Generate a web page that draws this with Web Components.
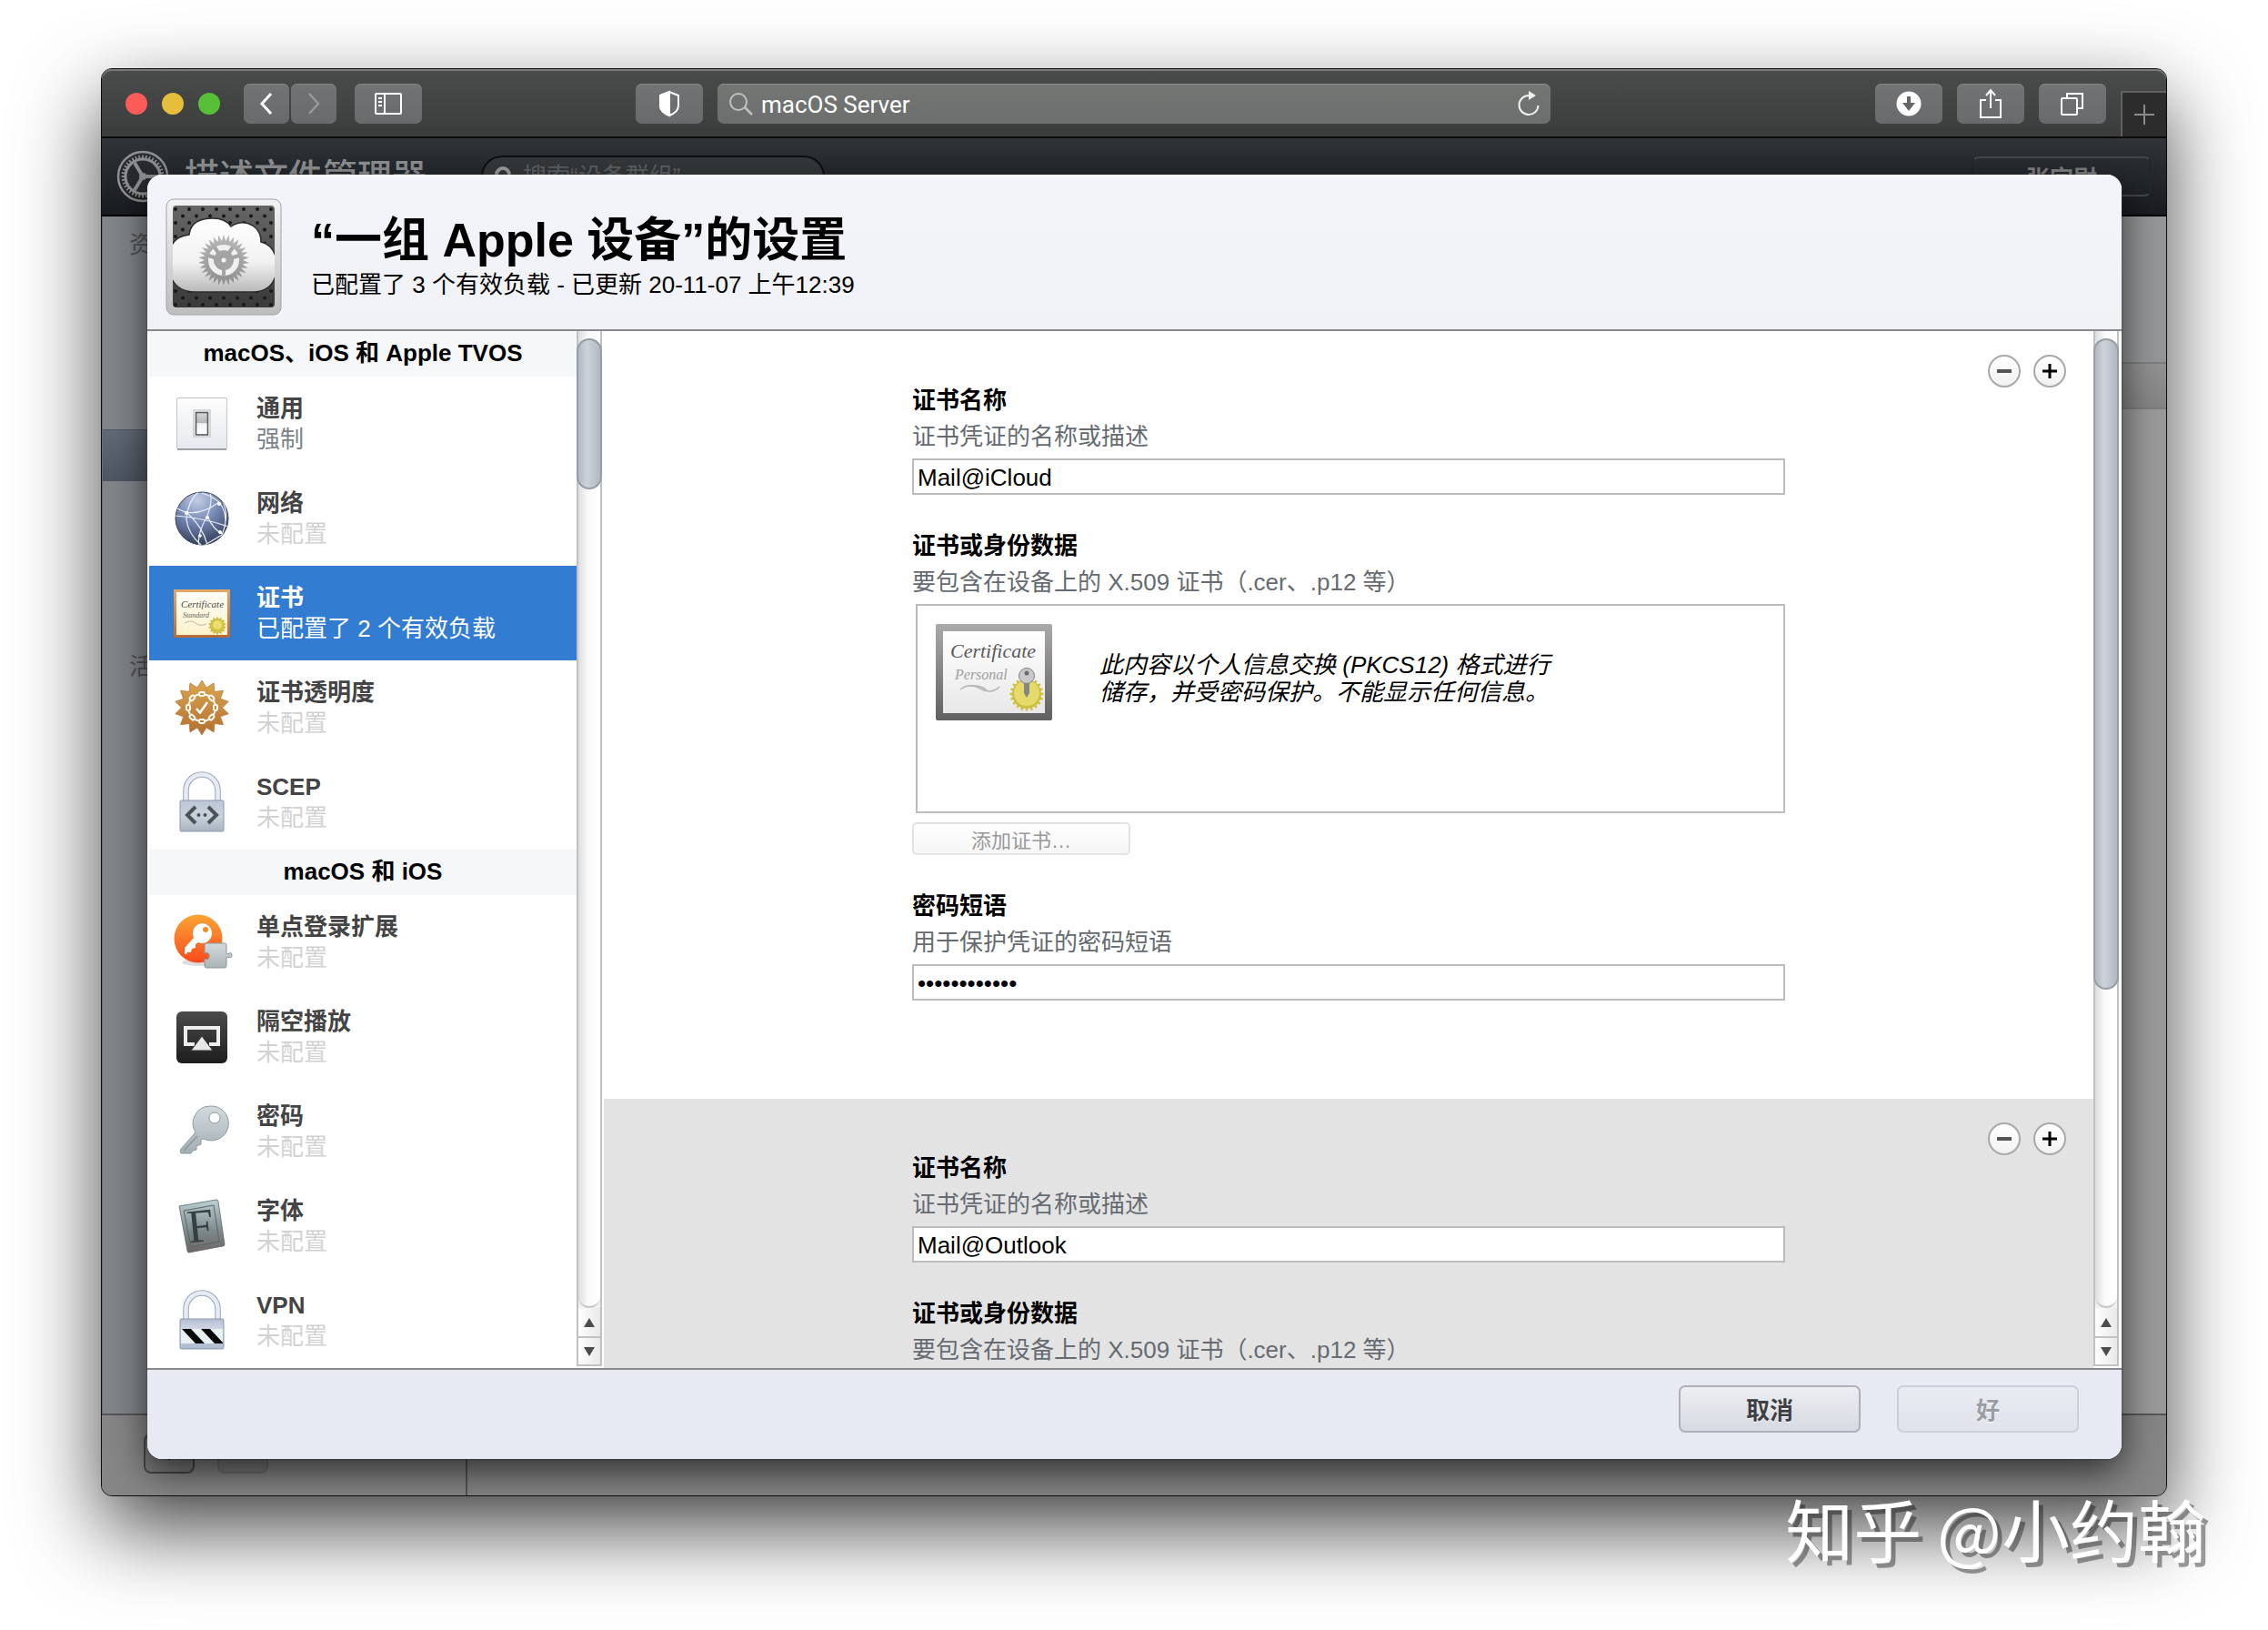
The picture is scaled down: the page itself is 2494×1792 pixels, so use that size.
<!DOCTYPE html>
<html lang="zh-CN">
<head>
<meta charset="utf-8">
<title>macOS Server</title>
<style>
    body {
        margin: 0;
        min-height: 100vh;
        box-sizing: border-box;
        padding: 75px 111px 147px;
        display: flex;
        position: relative;
        background: #fff;
        overflow: hidden;
        font-family: "Liberation Sans", "Noto Sans CJK SC", sans-serif;
        font-size: 26px;
    }
    mac-window { flex: 1; }
</style>
</head>
<body>
    <mac-window>
        <browser-toolbar slot="toolbar"></browser-toolbar>
        <profile-manager></profile-manager>
        <settings-dialog slot="dialog">
            <span slot="title">“一组 Apple 设备”的设置</span>
            <span slot="subtitle">已配置了 3 个有效负载 - 已更新 20-11-07 上午12:39</span>
            <payload-group slot="list" label="macOS、iOS 和 Apple TVOS">
                <payload-item icon="switch" name="通用" state="强制" required></payload-item>
                <payload-item icon="globe" name="网络" state="未配置"></payload-item>
                <payload-item icon="certificate" name="证书" state="已配置了 2 个有效负载" selected></payload-item>
                <payload-item icon="seal" name="证书透明度" state="未配置"></payload-item>
                <payload-item icon="scep" name="SCEP" state="未配置"></payload-item>
            </payload-group>
            <payload-group slot="list" label="macOS 和 iOS">
                <payload-item icon="sso" name="单点登录扩展" state="未配置"></payload-item>
                <payload-item icon="airplay" name="隔空播放" state="未配置"></payload-item>
                <payload-item icon="key" name="密码" state="未配置"></payload-item>
                <payload-item icon="font" name="字体" state="未配置"></payload-item>
                <payload-item icon="vpn" name="VPN" state="未配置"></payload-item>
            </payload-group>
            <certificate-panel value="Mail@iCloud" loaded></certificate-panel>
            <certificate-panel value="Mail@Outlook"></certificate-panel>
        </settings-dialog>
    </mac-window>
    <water-mark>知乎 @小约翰</water-mark>

<script>
// points of a toothed wheel, n teeth between radius r1 and r2
function gearPoints(cx, cy, n, r1, r2, flat) {
    const pts = [];
    const step = Math.PI * 2 / n;
    for (let i = 0; i < n; i++) {
        const a = i * step - Math.PI / 2;
        const angles = flat
            ? [[-0.5, r1], [-0.25, r1], [-0.2, r2], [0.2, r2], [0.25, r1]]
            : [[-0.5, r1], [0, r2]];
        angles.forEach(([k, r]) => {
            pts.push((cx + Math.cos(a + k * step) * r).toFixed(1) + ',' + (cy + Math.sin(a + k * step) * r).toFixed(1));
        });
    }
    return pts.join(' ');
}

function chainLinks() {
    let out = '';
    for (let i = 0; i < 8; i++) {
        out += `<rect x="27" y="13" width="6" height="4" rx="1.5" transform="rotate(${i * 45} 30 30)"/>`;
        out += `<path d="M34 15.6l3.6 1.4" transform="rotate(${i * 45} 30 30)"/>`;
    }
    return out;
}

const ICONS = {
    switch: `
        <defs><linearGradient id="a" x2="0" y2="1"><stop stop-color="#fdfdfd"/><stop offset="1" stop-color="#e6e9ee"/></linearGradient>
        <linearGradient id="b" x2="0" y2="1"><stop stop-color="#d8d8da"/><stop offset=".45" stop-color="#b4b6b9"/><stop offset=".5" stop-color="#f2f2f4"/><stop offset="1" stop-color="#fff"/></linearGradient></defs>
        <rect x="2.5" y="1.5" width="55" height="56" rx="1.5" fill="url(#a)" stroke="#c3c5c8"/>
        <path d="M3 58h54" stroke="#898c90" stroke-width="1.4"/>
        <rect x="21" y="15" width="18" height="29" fill="#fff" stroke="#b5b7ba"/>
        <rect x="23.5" y="17.5" width="13" height="24.5" fill="url(#b)" stroke="#55585c" stroke-width="1.6"/>`,
    globe: `
        <defs><radialGradient id="a" cx=".42" cy=".15" r=".95"><stop stop-color="#c3cde6"/><stop offset=".45" stop-color="#7486b2"/><stop offset=".8" stop-color="#44506f"/><stop offset="1" stop-color="#2b3248"/></radialGradient>
        <clipPath id="c"><circle cx="30" cy="30" r="29"/></clipPath></defs>
        <circle cx="30" cy="30" r="29" fill="url(#a)" stroke="#39415a"/>
        <g clip-path="url(#c)" fill="none" stroke="#e9eefb" stroke-width="1.2">
            <path d="M3 19q20 12 46-7M1 27q30 2 58 12M13 31Q14 12 26 1M13 31q2 16 16 28M13 23q18 16 23 36M36 27Q42 12 39 1M36 27Q24 48 27 60M36 27q6 16 20 22M49 12q12 16 3 36Q42 54 32 60M49 12Q40 5 30 2M52 8q6 14 4 25"/>
        </g>
        <g fill="#fff"><circle cx="13" cy="24" r="2"/><circle cx="36" cy="29" r="2"/><circle cx="49" cy="14" r="2"/><circle cx="50" cy="45" r="2"/><circle cx="28" cy="49" r="1.8"/></g>`,
    certificate: `
        <defs><linearGradient id="a" x2="0" y2="1"><stop stop-color="#e3a765"/><stop offset="1" stop-color="#b76a35"/></linearGradient>
        <linearGradient id="b" x2="0" y2="1"><stop stop-color="#fffef8"/><stop offset="1" stop-color="#fdf2cb"/></linearGradient></defs>
        <rect x="-1" y="4" width="62" height="53" fill="url(#a)"/>
        <rect x="2" y="7" width="56" height="47" fill="url(#b)"/>
        <text x="7" y="24" font-family="Liberation Serif, serif" font-style="italic" font-size="11" fill="#4b4a44">Certificate</text>
        <text x="9" y="35" font-family="Liberation Serif, serif" font-style="italic" font-size="8" fill="#66645c">Standard</text>
        <path d="M11 41q7-4 12 0t12 1" fill="none" stroke="#bbb7a6"/>
        <polygon points="${gearPoints(47, 44, 14, 7, 9.5)}" fill="#d6c53c" stroke="#a99a22" stroke-width=".5"/>
        <circle cx="47" cy="43" r="5" fill="#eade6f"/>`,
    seal: `
        <defs><linearGradient id="a" x2="0" y2="1"><stop stop-color="#dba74f"/><stop offset="1" stop-color="#b36f30"/></linearGradient></defs>
        <polygon points="${gearPoints(30, 30, 14, 22.5, 30)}" fill="url(#a)" stroke="#b27a38" stroke-width=".8"/>
        <g fill="none" stroke="#fff" stroke-width="1.9">${chainLinks()}<path d="M24 31l4 4.5L36 24" stroke-width="2.6"/></g>`,
    scep: `
        <defs><linearGradient id="a" x2="0" y2="1"><stop stop-color="#bcc5d3"/><stop offset=".5" stop-color="#c9d2dc"/><stop offset="1" stop-color="#a7b4c1"/></linearGradient></defs>
        <path d="M12.5 30V17a17.5 17.5 0 0 1 35 0v13" fill="none" stroke="#9ba5b8" stroke-width="6.5"/>
        <path d="M12.5 30V17a17.5 17.5 0 0 1 35 0v13" fill="none" stroke="#e7ebf5" stroke-width="4.5"/>
        <rect x="6" y="28" width="48" height="34" rx="1.5" fill="url(#a)" stroke="#8d99aa"/>
        <path d="M23 35L14 44l9 9M37 35l9 9-9 9" fill="none" stroke="#4d5259" stroke-width="4"/>
        <circle cx="26.5" cy="44" r="2" fill="#4d5259"/><circle cx="33.5" cy="44" r="2" fill="#4d5259"/>`,
    vpn: `
        <defs><linearGradient id="a" x2="0" y2="1"><stop stop-color="#b4bdd2"/><stop offset=".3" stop-color="#cdd4e3"/><stop offset="1" stop-color="#adbbd0"/></linearGradient></defs>
        <path d="M12.5 30V17a17.5 17.5 0 0 1 35 0v13" fill="none" stroke="#9ba5b8" stroke-width="6.5"/>
        <path d="M12.5 30V17a17.5 17.5 0 0 1 35 0v13" fill="none" stroke="#e7ebf5" stroke-width="4.5"/>
        <rect x="6" y="28" width="48" height="33" rx="1.5" fill="url(#a)" stroke="#8d99aa"/>
        <path d="M7 39h46v16H7z" fill="#e9f0f3"/>
        <path d="M8 39h10l15 16H23zM29 39h10l14 15v1H44z" fill="#0a0a0a"/>`,
    sso: `
        <defs><linearGradient id="a" x2="0" y2="1"><stop stop-color="#fba534"/><stop offset="1" stop-color="#fb4a1c"/></linearGradient>
        <linearGradient id="b" x2="0" y2="1"><stop stop-color="#d3dbdd"/><stop offset="1" stop-color="#a9b3b6"/></linearGradient></defs>
        <g transform="translate(0 -2)">
            <ellipse cx="28" cy="54" rx="20" ry="4" fill="#0002"/>
            <circle cx="26" cy="28" r="26.5" fill="url(#a)"/>
            <path d="M30 11a11 11 0 1 1 0 22q-2 0-4-1l-3 2v4l-4 1-1 4h-4l-1 2h-2V38l10-11q-1-3-1-5a11 11 0 0 1 10-11z" fill="#fff"/>
            <circle cx="34" cy="18" r="3" fill="#fa8b2c"/>
            <path d="M34 33h21q2 0 2 2v9l1 1q5-3 5 1t-5 2l-1 1v9q0 2-2 2H35q-2 0-2-2v-8q5 2 5-3t-5-3v-9q0-2 1-2z" fill="url(#b)" stroke="#8c9598"/>
        </g>`,
    airplay: `
        <defs><linearGradient id="a" x2="0" y2="1"><stop stop-color="#4b4b4b"/><stop offset="1" stop-color="#1d1d1d"/></linearGradient></defs>
        <rect x="2" y="2" width="56" height="57" rx="6" fill="url(#a)"/>
        <path d="M22 38H12V20h36v18H38" fill="none" stroke="#eee" stroke-width="4"/>
        <path d="M30 29L42 45H18z" fill="#e8e8e8" stroke="#333"/>`,
    key: `
        <defs><linearGradient id="a" x2="0" y2="1"><stop stop-color="#d3dadd"/><stop offset="1" stop-color="#a3aeb3"/></linearGradient></defs>
        <path fill-rule="evenodd" d="M39 2a19 19 0 1 1-7 36l-3 1v5l-5 2v4l-4 1-2 3H8q-3 0-1-5l16-18A19 19 0 0 1 39 2zm5 7a6 6 0 1 0 0 12 6 6 0 0 0 0-12z" fill="url(#a)" stroke="#8f9b9f"/>
        <path d="M25 35L10 51" stroke="#8a979b" stroke-width="1.5"/>`,
    font: `
        <defs><linearGradient id="a" x2="0" y2="1"><stop stop-color="#bcd0d4"/><stop offset=".6" stop-color="#7d888a"/><stop offset="1" stop-color="#6c6663"/></linearGradient></defs>
        <path d="M5 8L46 1q2 0 2 2l7 47q0 2-2 2L16 59q-2 0-2-2z" fill="url(#a)" stroke="#5c6465" stroke-width=".8"/>
        <path d="M10 13L43 7l6 40-31 6z" fill="none" stroke="#5a6769" stroke-width="1"/>
        <text x="14" y="47" font-family="Liberation Serif, serif" font-size="52" fill="#354244" transform="rotate(-6 30 30)">F</text>`
};

class MacWindow extends HTMLElement {
    constructor() {
        super();
        this.attachShadow({ mode: 'open' });
    }

    connectedCallback() {
        this.shadowRoot.innerHTML = `
            <style>
                :host {
                    display: flex;
                    flex-direction: column;
                    box-sizing: border-box;
                    border: 1px solid #0c0c0c;
                    border-radius: 12px;
                    box-shadow: 0 36px 90px rgba(0, 0, 0, 0.72);
                    background: #848484;
                }
                main {
                    flex: 1;
                    display: flex;
                    flex-direction: column;
                    position: relative;
                    min-height: 0;
                }
                ::slotted(profile-manager) { flex: 1; }
                ::slotted(settings-dialog) {
                    position: absolute;
                    inset: 40px 49px 40px 50px;
                }
            </style>
            <slot name="toolbar"></slot>
            <main>
                <slot></slot>
                <slot name="dialog"></slot>
            </main>
        `;
    }
}

class BrowserToolbar extends HTMLElement {
    constructor() {
        super();
        this.attachShadow({ mode: 'open' });
    }

    connectedCallback() {
        this.shadowRoot.innerHTML = `
            <style>
                :host {
                    display: grid;
                    grid-template-columns: 587px 1fr 677px;
                    height: 76px;
                    box-sizing: border-box;
                    padding-top: 2px;
                    border-bottom: 2px solid #0b0b0b;
                    border-radius: 11px 11px 0 0;
                    box-shadow: inset 0 2px 0 #7a7b79;
                    background: linear-gradient(#4a4b4b, #3b3c3c);
                }
                div { display: flex; align-items: center; }
                .left { padding-left: 26px; }
                .lights { gap: 16px; margin-right: 26px; }
                .lights i { width: 24px; height: 24px; border-radius: 50%; }
                button {
                    width: 74px;
                    height: 44px;
                    padding: 0;
                    border: 0;
                    border-radius: 7px;
                    display: flex;
                    align-items: center;
                    justify-content: center;
                    background: linear-gradient(#727374, #696a6b);
                    box-shadow: inset 0 1px 0 #858686;
                }
                .nav { width: 50px; margin-right: 2px; }
                .nav + .nav { margin-right: 20px; }
                .center { gap: 16px; }
                label {
                    flex: 1;
                    height: 44px;
                    display: flex;
                    align-items: center;
                    box-sizing: border-box;
                    padding: 0 10px 0 12px;
                    gap: 8px;
                    border-radius: 7px;
                    background: linear-gradient(#747674, #6d6f6e);
                    box-shadow: inset 0 1px 0 #8d8f8d;
                }
                input {
                    flex: 1;
                    min-width: 0;
                    padding: 2px 0 0;
                    border: 0;
                    outline: 0;
                    background: none;
                    color: #fff;
                    font: 26px Roboto, sans-serif;
                }
                .right { justify-content: flex-end; gap: 16px; }
                .right .tab {
                    width: 50px;
                    height: 50px;
                    align-self: flex-end;
                    border-radius: 0;
                    border-left: 2px solid #616161;
                    border-top: 2px solid #616161;
                    background: #2c2c2c;
                    box-shadow: none;
                }
                svg { fill: none; stroke: #fff; stroke-width: 2; }
            </style>
            <div class="left">
                <div class="lights">
                    <i style="background:#fc5b57"></i>
                    <i style="background:#e5bf3c"></i>
                    <i style="background:#57c038"></i>
                </div>
                <button class="nav" aria-label="后退"><svg width="20" height="28"><path d="M15 3L5 14l10 11" stroke-width="3"/></svg></button>
                <button class="nav" aria-label="前进"><svg width="20" height="28" style="stroke:#989999"><path d="M5 3l10 11L5 25" stroke-width="2.5"/></svg></button>
                <button aria-label="边栏"><svg width="30" height="26"><rect x="1" y="2" width="28" height="22" rx="1"/><path d="M11 2v22M4 7h4M4 11h4M4 15h4"/></svg></button>
            </div>
            <div class="center">
                <button aria-label="隐私报告"><svg width="26" height="30"><path d="M13 2l10 4v11q0 7-10 11Q3 24 3 17V6z"/><path d="M13 2L3 6v11q0 7 10 11z" fill="#fff"/></svg></button>
                <label>
                    <svg width="28" height="28" style="stroke:#c0c1c0"><circle cx="11" cy="12" r="9"/><path d="M18 18l8 8" stroke-width="2.5"/></svg>
                    <input aria-label="地址" value="macOS Server">
                    <svg width="28" height="30" style="stroke:#f0f0f0"><path d="M14 6a10.5 10.5 0 1 0 10.5 11" /><path d="M14 1v10l8-5z" fill="#f0f0f0" stroke="none"/></svg>
                </label>
            </div>
            <div class="right">
                <button aria-label="下载"><svg width="30" height="30"><circle cx="15" cy="15" r="13.5" fill="#fff" stroke="none"/><path d="M15 7v9" stroke="#666" stroke-width="4"/><path d="M8 14h14l-7 9z" fill="#666" stroke="none"/></svg></button>
                <button aria-label="共享"><svg width="26" height="34"><path d="M8 13H2v19h22V13h-6M13 22V3M8 8l5-6 5 6"/></svg></button>
                <button aria-label="标签页概览"><svg width="28" height="28"><rect x="2" y="8" width="17" height="18" rx="1"/><path d="M8 7V3h17v16h-5"/></svg></button>
                <button class="tab" aria-label="新标签页"><svg width="24" height="24"><path d="M12 1v22M1 12h22" stroke="#8b8b8b"/></svg></button>
            </div>
        `;
    }
}

class ProfileManager extends HTMLElement {
    constructor() {
        super();
        this.attachShadow({ mode: 'open' });
    }

    connectedCallback() {
        this.shadowRoot.innerHTML = `
            <style>
                :host {
                    display: flex;
                    flex-direction: column;
                    overflow: hidden;
                    border-radius: 0 0 11px 11px;
                }
                header {
                    height: 86px;
                    box-sizing: border-box;
                    display: flex;
                    align-items: center;
                    padding: 0 16px;
                    border-bottom: 2px solid #000;
                    background: linear-gradient(#2f3438, #191c20);
                    color: #919395;
                }
                h1 {
                    margin: 0 60px 0 17px;
                    font-size: 38px;
                    font-weight: 500;
                    line-height: 44px;
                }
                .search {
                    width: 378px;
                    height: 46px;
                    box-sizing: border-box;
                    display: flex;
                    align-items: center;
                    gap: 8px;
                    padding-left: 12px;
                    border: 2px solid #0d0f10;
                    border-radius: 23px;
                    background: #35393b;
                }
                input {
                    width: 280px;
                    padding: 0;
                    border: 0;
                    background: none;
                    font: inherit;
                }
                input::placeholder { color: #606466; opacity: 1; }
                .user {
                    width: 198px;
                    height: 44px;
                    margin-left: auto;
                    padding: 0;
                    border: 2px solid #44484b;
                    border-left-color: #24282b;
                    border-right-color: #24282b;
                    border-radius: 8px;
                    background: none;
                    color: #808384;
                    font: bold 26px "Liberation Sans", "Noto Sans CJK SC", sans-serif;
                }
                .body { flex: 1; display: flex; }
                nav {
                    width: 400px;
                    border-left: 1px solid #6a6e71;
                    background: #82868a;
                    color: #4d5256;
                    line-height: 60px;
                }
                nav p { margin: 0; height: 60px; padding-left: 29px; }
                nav .first { height: 233px; padding-top: 1px; }
                nav .active {
                    height: 56px;
                    border-top: 1px solid #4d5561;
                    background: linear-gradient(#626a78, #4e5664);
                }
                nav .second { padding-top: 174px; }
                .content { flex: 1; background: #999; }
                .content .top { height: 160px; background: #949596; }
                .content .strip {
                    height: 48px;
                    border: 2px solid #7c7d7d;
                    border-width: 2px 0;
                    background: linear-gradient(#919192, #848484);
                }
                footer {
                    height: 88px;
                    display: flex;
                    border-top: 2px solid #555;
                    background: #868686;
                }
                footer button {
                    width: 56px;
                    height: 44px;
                    margin: 20px 25px 0 0;
                    border: 2px solid #484848;
                    border-radius: 8px;
                    background: #7b7b7b;
                    font-size: 26px;
                    padding: 0;
                }
                footer button:first-child { margin-left: 46px; }
                footer button:disabled { border-color: #707070; }
                footer i { width: 2px; margin-left: 192px; background: #555; }
            </style>
            <header>
                <svg width="58" height="58" viewBox="0 0 58 58" fill="none" stroke="#8f9193">
                    <circle cx="29" cy="29" r="27" stroke-width="2.5"/>
                    <polygon points="${gearPoints(29, 29, 36, 20.5, 23.5, true)}" fill="#8f9193" stroke="none"/>
                    <circle cx="29" cy="29" r="17.5" fill="#272b2f" stroke="none"/>
                    <path d="M29 29H46M29 29L20 14M29 29L20 44" stroke-width="4"/>
                    <circle cx="29" cy="29" r="3" fill="#8f9193" stroke-width="2"/>
                </svg>
                <h1>描述文件管理器</h1>
                <label class="search">
                    <svg width="24" height="24" fill="none" stroke="#a0a2a3" stroke-width="4"><circle cx="10" cy="10" r="7"/><path d="M15 15l7 7"/></svg>
                    <input aria-label="搜索" placeholder="搜索“设备群组”">
                </label>
                <button class="user">张宗尉</button>
            </header>
            <div class="body">
                <nav>
                    <p class="first">资源库</p>
                    <p class="active"></p>
                    <p class="second">活动</p>
                </nav>
                <div class="content">
                    <div class="top"></div>
                    <div class="strip"></div>
                </div>
            </div>
            <footer>
                <button aria-label="添加">+</button>
                <button aria-label="移除" disabled></button>
                <i></i>
            </footer>
        `;
    }
}

class ScrollBar extends HTMLElement {
    constructor() {
        super();
        this.attachShadow({ mode: 'open' });
    }

    connectedCallback() {
        this.shadowRoot.innerHTML = `
            <style>
                :host {
                    display: flex;
                    flex-direction: column;
                    width: 28px;
                    box-sizing: border-box;
                    margin-bottom: 2px;
                    border: 2px solid #c1c1c2;
                    border-top: 0;
                    background: #f1f1f2;
                }
                .track {
                    flex: 1;
                    padding-top: 8px;
                    border-bottom: 2px solid #c6c6c7;
                    border-radius: 0 0 12px 12px;
                    background: linear-gradient(90deg, #dedee0, #fafafa 45%, #fff);
                }
                .thumb {
                    height: var(--thumb, 20%);
                    box-sizing: border-box;
                    border: 2px solid #989ca3;
                    border-radius: 14px;
                    margin: 0 -2px;
                    background: linear-gradient(90deg, #b3b9c3, #cdd2da 40%, #b1b7c0);
                }
                button {
                    height: 31px;
                    padding: 0;
                    border: 0;
                    background: linear-gradient(90deg, #fdfdfd, #e9e9ea);
                }
                button + button { border-top: 2px solid #c1c1c2; }
                svg { display: block; margin: auto; fill: #4c4c4c; }
            </style>
            <div class="track"><div class="thumb"></div></div>
            <button aria-label="向上滚动"><svg width="12" height="10"><path d="M6 0l6 10H0z"/></svg></button>
            <button aria-label="向下滚动"><svg width="12" height="10"><path d="M0 0h12L6 10z"/></svg></button>
        `;
    }
}

class SettingsDialog extends HTMLElement {
    constructor() {
        super();
        this.attachShadow({ mode: 'open' });
    }

    connectedCallback() {
        let holes = '';
        for (let row = 0; row < 15; row++) {
            for (let col = 0; col < 8; col++) {
                holes += `<circle cx="${11 + col * 15 + (row % 2) * 8}" cy="${12 + row * 7.5}" r="2"/>`;
            }
        }
        this.shadowRoot.innerHTML = `
            <style>
                :host {
                    display: flex;
                    flex-direction: column;
                    overflow: hidden;
                    border-radius: 16px;
                    background: #fff;
                    box-shadow: 0 14px 40px rgba(0, 0, 0, 0.65), 0 0 2px #444;
                }
                header {
                    display: flex;
                    height: 172px;
                    box-sizing: border-box;
                    padding: 24px 20px 0;
                    gap: 32px;
                    border-top: 2px solid #fff;
                    border-bottom: 2px solid #87898c;
                    background: linear-gradient(#f3f4f9, #f0f2f6);
                }
                header svg { flex: none; }
                h2 {
                    margin: 14px 0 0;
                    font-size: 52px;
                    line-height: 64px;
                }
                header p { margin: 0; line-height: 34px; }
                .body {
                    flex: 1;
                    display: flex;
                    min-height: 0;
                    padding: 0 3px 0 2px;
                }
                .list { width: 470px; overflow: hidden; }
                .panels { flex: 1; overflow: hidden; margin-left: 2px; }
                .list + scroll-bar { --thumb: 166px; }
                .panels + scroll-bar { --thumb: 716px; }
                footer {
                    height: 100px;
                    box-sizing: border-box;
                    display: flex;
                    justify-content: flex-end;
                    gap: 40px;
                    padding: 17px 47px 0;
                    border-top: 2px solid #87898c;
                    background: #e7eaf2;
                }
                footer button {
                    width: 200px;
                    height: 52px;
                    padding: 0 0 2px;
                    border: 2px solid #adb0b6;
                    border-radius: 7px;
                    background: linear-gradient(#eceef2, #d6d9e1);
                    color: #3d3f42;
                    font: bold 26px "Liberation Sans", "Noto Sans CJK SC", sans-serif;
                    text-shadow: 0 1px 0 #fff;
                }
                footer button:disabled {
                    border-color: #cdd0d7;
                    background: linear-gradient(#e9ebf2, #e0e3ec);
                    color: #9a9da3;
                }
            </style>
            <header>
                <svg width="128" height="130" viewBox="0 0 128 130">
                    <defs>
                        <linearGradient id="frame" x2="0" y2="1"><stop stop-color="#f3f3f4"/><stop offset="1" stop-color="#bdbdbe"/></linearGradient>
                        <linearGradient id="mesh" x2="0" y2="1"><stop stop-color="#666"/><stop offset="1" stop-color="#3a3a3a"/></linearGradient>
                        <linearGradient id="cloud" x2="0" y2="1"><stop stop-color="#fff"/><stop offset=".6" stop-color="#f1f1f1"/><stop offset="1" stop-color="#b9b9b9"/></linearGradient>
                        <linearGradient id="gear" x2="0" y2="1"><stop stop-color="#b9b9b9"/><stop offset="1" stop-color="#8e8e8e"/></linearGradient>
                        <clipPath id="inner"><rect x="8" y="8" width="112" height="112" rx="4"/></clipPath>
                    </defs>
                    <rect x="1" y="1" width="126" height="127" rx="8" fill="url(#frame)" stroke="#a2a2a4"/>
                    <g clip-path="url(#inner)">
                        <rect x="8" y="8" width="112" height="112" fill="url(#mesh)"/>
                        <g fill="#181818">${holes}</g>
                        <path d="M4 62Q6 42 26 40Q28 22 52 22Q66 22 72 31Q84 23 96 30Q105 36 105 48Q122 52 123 76Q120 103 96 103H32Q6 102 4 76z" fill="url(#cloud)" stroke="#2c2c2c" stroke-width="1.5"/>
                    </g>
                    <polygon points="${gearPoints(64, 68, 30, 21, 28)}" fill="url(#gear)"/>
                    <circle cx="64" cy="68" r="14" fill="none" stroke="#f0f0f0" stroke-width="6"/>
                    <path d="M64 68v18M64 68l17-5M64 68L47 63M64 68L54 54M64 68l10-14" stroke="#a3a3a3" stroke-width="4"/>
                    <circle cx="64" cy="68" r="10" fill="#a3a3a3"/>
                    <circle cx="64" cy="68" r="2.5" fill="#f4f4f4"/>
                </svg>
                <div>
                    <h2><slot name="title"></slot></h2>
                    <p><slot name="subtitle"></slot></p>
                </div>
            </header>
            <div class="body">
                <div class="list"><slot name="list"></slot></div>
                <scroll-bar></scroll-bar>
                <div class="panels"><slot></slot></div>
                <scroll-bar></scroll-bar>
            </div>
            <footer>
                <button>取消</button>
                <button disabled>好</button>
            </footer>
        `;
    }
}

class PayloadGroup extends HTMLElement {
    constructor() {
        super();
        this.attachShadow({ mode: 'open' });
    }

    connectedCallback() {
        this.shadowRoot.innerHTML = `
            <style>
                :host { display: block; }
                h3 {
                    margin: 0;
                    height: 50px;
                    line-height: 48px;
                    font-size: 26px;
                    text-align: center;
                    background: #f6f7f9;
                }
            </style>
            <h3>${this.getAttribute('label')}</h3>
            <slot></slot>
        `;
    }
}

class PayloadItem extends HTMLElement {
    constructor() {
        super();
        this.attachShadow({ mode: 'open' });
    }

    connectedCallback() {
        this.shadowRoot.innerHTML = `
            <style>
                :host {
                    display: flex;
                    align-items: center;
                    gap: 30px;
                    height: 104px;
                    padding-left: 28px;
                    line-height: 34px;
                    color: #444;
                }
                :host([selected]) { background: #327cd1; color: #fff; }
                svg { flex: none; overflow: visible; }
                b, span { display: block; }
                span { color: #d2d2d2; }
                :host([required]) span { color: #7a828a; }
                :host([selected]) span { color: #fff; }
            </style>
            <svg width="60" height="60" viewBox="0 0 60 60">${ICONS[this.getAttribute('icon')]}</svg>
            <div>
                <b>${this.getAttribute('name')}</b>
                <span>${this.getAttribute('state')}</span>
            </div>
        `;
    }
}

class CertificatePanel extends HTMLElement {
    constructor() {
        super();
        this.attachShadow({ mode: 'open' });
    }

    // certificate preview and passphrase, only once the credential is loaded
    details() {
        return `
            <div class="box">
                <svg width="128" height="106" viewBox="0 0 128 106">
                    <defs>
                        <linearGradient id="edge" x2="0" y2="1"><stop stop-color="#aaa"/><stop offset="1" stop-color="#606060"/></linearGradient>
                        <linearGradient id="paper" x2="0" y2="1"><stop stop-color="#fff"/><stop offset="1" stop-color="#e8e8e8"/></linearGradient>
                    </defs>
                    <rect width="128" height="106" rx="2" fill="url(#edge)"/>
                    <rect x="8" y="8" width="112" height="90" fill="url(#paper)"/>
                    <text x="16" y="37" font-family="Liberation Serif, serif" font-style="italic" font-size="22" fill="#5a5a5a">Certificate</text>
                    <text x="21" y="61" font-family="Liberation Serif, serif" font-style="italic" font-size="16" fill="#a0a0a0">Personal</text>
                    <path d="M27 72q10-8 22-1t21-2M36 68q14-1 20 5" fill="none" stroke="#b5b5b5" stroke-width="1.5"/>
                    <polygon points="${gearPoints(100, 77, 20, 16, 18.5, true)}" fill="#cdbf3d"/>
                    <circle cx="100" cy="76" r="14" fill="#e5da6c"/>
                    <path d="M97 64h6v12l-3 5-3-5z" fill="#858585"/>
                    <circle cx="100" cy="57" r="8.5" fill="#c9c9cb" stroke="#808084"/>
                    <circle cx="100" cy="54" r="2.5" fill="#6b6b6f"/>
                </svg>
                <em>此内容以个人信息交换 (PKCS12) 格式进行储存，并受密码保护。不能显示任何信息。</em>
            </div>
            <button class="add" disabled>添加证书…</button>
            <div class="field">
                <label for="pass">密码短语</label>
                <p>用于保护凭证的密码短语</p>
                <input id="pass" type="password" value="abcdefghijkl">
            </div>
        `;
    }

    connectedCallback() {
        this.shadowRoot.innerHTML = `
            <style>
                :host {
                    display: grid;
                    grid-template-columns: 1fr 960px 1fr;
                    height: 844px;
                    background: #fff;
                }
                :host(:nth-of-type(even)) { background: #e3e3e3; }
                .form { grid-column: 2; padding-top: 20px; }
                .field { padding-top: 36px; }
                label, .label {
                    display: block;
                    font-weight: bold;
                    line-height: 40px;
                }
                p { margin: 0 0 4px; line-height: 40px; color: #656b70; }
                input {
                    display: block;
                    width: 100%;
                    height: 40px;
                    box-sizing: border-box;
                    padding: 2px 4px 0;
                    border: 2px solid #bcbcbc;
                    background: #fff;
                    color: #000;
                    font: inherit;
                }
                .box {
                    display: flex;
                    gap: 52px;
                    height: 230px;
                    box-sizing: border-box;
                    margin-left: 4px;
                    padding: 20px;
                    border: 2px solid #bcbcbc;
                    background: #fff;
                }
                .box svg { flex: none; }
                .box em {
                    width: 510px;
                    margin-top: 30px;
                    line-height: 30px;
                }
                .add {
                    display: block;
                    width: 240px;
                    height: 36px;
                    margin-top: 10px;
                    padding: 0 0 2px;
                    border: 2px solid #e3e3e3;
                    border-radius: 5px;
                    background: linear-gradient(#fff, #f6f6f6);
                    color: #999;
                    font: 22px "Liberation Sans", "Noto Sans CJK SC", sans-serif;
                }
                .actions {
                    display: flex;
                    justify-content: flex-end;
                    gap: 14px;
                    padding: 26px 30px 0 0;
                }
                .actions button {
                    width: 36px;
                    height: 36px;
                    padding: 0;
                    border: 2px solid #a9a9a9;
                    border-radius: 50%;
                    background: linear-gradient(#fff, #f1f1f1);
                }
                .actions svg { display: block; margin: auto; }
            </style>
            <div class="form">
                <div class="field">
                    <label for="name">证书名称</label>
                    <p>证书凭证的名称或描述</p>
                    <input id="name" value="${this.getAttribute('value')}">
                </div>
                <div class="field">
                    <div class="label">证书或身份数据</div>
                    <p>要包含在设备上的 X.509 证书（.cer、.p12 等）</p>
                </div>
                ${this.hasAttribute('loaded') ? this.details() : ''}
            </div>
            <div class="actions">
                <button aria-label="移除"><svg width="16" height="16"><path d="M0 8h16" stroke="#555" stroke-width="4"/></svg></button>
                <button aria-label="添加"><svg width="16" height="16"><path d="M0 8h16M8 0v16" stroke="#000" stroke-width="3"/></svg></button>
            </div>
        `;
    }
}

class WaterMark extends HTMLElement {
    constructor() {
        super();
        this.attachShadow({ mode: 'open' });
    }

    connectedCallback() {
        this.shadowRoot.innerHTML = `
            <style>
                :host {
                    position: absolute;
                    right: 68px;
                    bottom: 72px;
                    color: #fff;
                    font-family: "Noto Sans CJK SC", sans-serif;
                    font-size: 75px;
                    line-height: 80px;
                    text-shadow: 5px 5px 0 rgba(0, 0, 0, 0.38);
                }
            </style>
            <slot></slot>
        `;
    }
}

customElements.define('scroll-bar', ScrollBar);
customElements.define('browser-toolbar', BrowserToolbar);
customElements.define('profile-manager', ProfileManager);
customElements.define('payload-item', PayloadItem);
customElements.define('payload-group', PayloadGroup);
customElements.define('certificate-panel', CertificatePanel);
customElements.define('settings-dialog', SettingsDialog);
customElements.define('mac-window', MacWindow);
customElements.define('water-mark', WaterMark);
</script>
</body>
</html>
